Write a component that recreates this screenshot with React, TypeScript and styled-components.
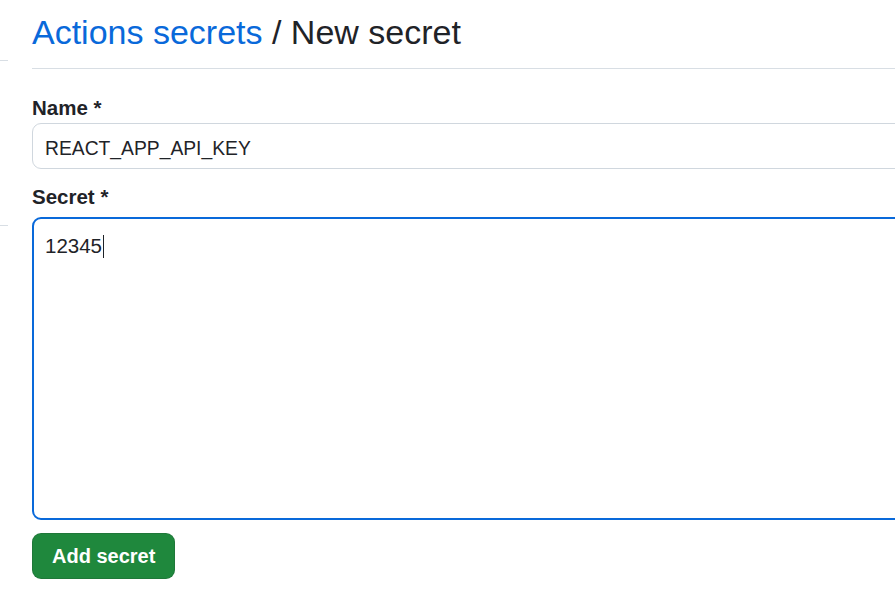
import React from 'react';
import styled, { createGlobalStyle } from 'styled-components';

const GlobalStyle = createGlobalStyle`
  html, body {
    margin: 0;
    padding: 0;
    background: #ffffff;
    overflow: hidden;
  }
  body {
    font-family: 'Liberation Sans', Arial, Helvetica, sans-serif;
    color: #1f2328;
  }
`;

const Page = styled.div`
  width: 100vw;
  height: 100vh;
  overflow: hidden;
  display: flex;
  gap: 24px;
`;

/* the settings sidebar, scrolled mostly out of view on the left */
const Sidebar = styled.nav`
  flex: 0 0 8px;
  display: flex;
  flex-direction: column;
`;

const NavGroup = styled.div<{ $height: number }>`
  height: ${(p) => p.$height}px;
  border-bottom: 1px solid #d8dee4;
`;

const Main = styled.main`
  flex: 0 0 1000px;
  display: flex;
  flex-direction: column;
`;

const Header = styled.div`
  padding-top: 11px;
  padding-bottom: 15px;
  border-bottom: 1px solid #d8dee4;
`;

const Title = styled.h2`
  margin: 0;
  font-size: 34px;
  line-height: 42px;
  font-weight: 400;
  color: #1f2328;
`;

const TitleLink = styled.a`
  color: #0969da;
  text-decoration: none;
`;

const Form = styled.form`
  display: flex;
  flex-direction: column;
  align-items: flex-start;
  padding-top: 27px;
`;

const Label = styled.label<{ $gap: number }>`
  display: block;
  font-size: 20.5px;
  line-height: 24px;
  font-weight: 700;
  margin-bottom: ${(p) => p.$gap}px;
`;

const Field = styled.div`
  width: 100%;
  display: flex;
  flex-direction: column;
  & + & {
    margin-top: 16px;
  }
`;

const TextInput = styled.input`
  box-sizing: border-box;
  width: 100%;
  height: 46px;
  padding: 14px 12px 8px;
  border: 1px solid #d0d7de;
  border-radius: 9px;
  background: #ffffff;
  font-family: inherit;
  font-size: 19.3px;
  line-height: 22px;
  color: #1f2328;
  outline: none;
`;

const SecretBox = styled.div`
  box-sizing: border-box;
  width: 100%;
  height: 303px;
  padding: 15px 11px;
  border: 2px solid #0969da;
  border-radius: 9px;
  background: #ffffff;
  font-size: 20.5px;
  line-height: 24px;
  color: #1f2328;
  white-space: pre-wrap;
`;

const Caret = styled.span`
  display: inline-block;
  width: 1px;
  height: 23px;
  margin-left: 1px;
  background: #1f2328;
  vertical-align: -5px;
`;

const SubmitButton = styled.button`
  margin-top: 13px;
  box-sizing: border-box;
  height: 46px;
  padding: 0 19px;
  border: 1px solid rgba(31, 35, 40, 0.15);
  border-radius: 9px;
  background: #1f883d;
  color: #ffffff;
  font-family: inherit;
  font-size: 20px;
  font-weight: 700;
  line-height: 24px;
  cursor: pointer;
`;

export default function App() {
  return (
    <>
      <GlobalStyle />
      <Page>
        <Sidebar>
          <NavGroup $height={60} />
          <NavGroup $height={164} />
        </Sidebar>
        <Main>
          <Header>
            <Title>
              <TitleLink href="#">Actions secrets</TitleLink> / New secret
            </Title>
          </Header>
          <Form onSubmit={(e) => e.preventDefault()}>
            <Field>
              <Label $gap={3} htmlFor="secret_name">Name *</Label>
              <TextInput id="secret_name" type="text" defaultValue="REACT_APP_API_KEY" />
            </Field>
            <Field>
              <Label $gap={8}>Secret *</Label>
              <SecretBox role="textbox" aria-multiline="true">
                12345<Caret />
              </SecretBox>
            </Field>
            <SubmitButton type="submit">Add secret</SubmitButton>
          </Form>
        </Main>
      </Page>
    </>
  );
}
